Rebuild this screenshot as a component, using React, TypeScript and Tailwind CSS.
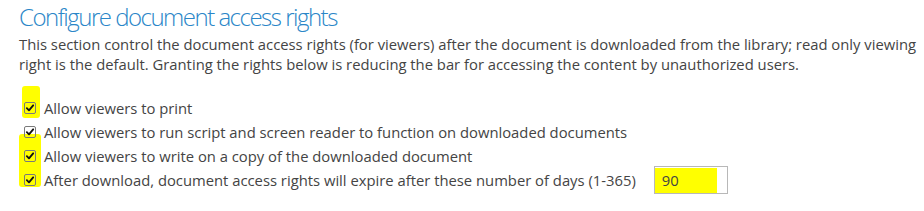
const rows = [
  'Allow viewers to print',
  'Allow viewers to run script and screen reader to function on downloaded documents',
  'Allow viewers to write on a copy of the downloaded document',
];

function Check() {
  return (
    <span className="relative z-10 flex h-[12px] w-[12px] shrink-0 items-center justify-center rounded-[2px] border border-[#7a7a7a] bg-transparent">
      <svg viewBox="0 0 12 12" className="h-[10px] w-[10px]">
        <path d="M2.2 6.2 L4.8 8.8 L9.8 2.8" fill="none" stroke="#111" strokeWidth={2.2} strokeLinecap="round" strokeLinejoin="round" />
      </svg>
    </span>
  );
}

export default function App() {
  return (
    <div className="relative h-[211px] w-[924px] overflow-hidden bg-white pl-[19px] text-[#444] [font-family:'Open_Sans',sans-serif]">
      <h2 className="text-[24px] font-light leading-[34px] tracking-[-1.5px] text-[#2a86c8]">Configure document access rights</h2>
      <p className="w-[905px] text-[14.8px] leading-[20px]">
        This section control the document access rights (for viewers) after the document is downloaded from the library; read only viewing right is the default. Granting the rights below is reducing the bar for accessing the content by unauthorized users.
      </p>
      <div className="mt-[22px] flex flex-col pl-[5px]">
        {rows.map((r) => (
          <label key={r} className="flex h-[24px] items-center gap-[8px] text-[14.8px]">
            <Check />
            <span>{r}</span>
          </label>
        ))}
        <label className="flex h-[24px] items-center gap-[8px] text-[14.8px]">
          <Check />
          <span>After download, document access rights will expire after these number of days (1-365)</span>
          <span className="relative ml-[10px] flex h-[28px] w-[74px] items-center border border-[#b8b8b8] bg-white pl-[7px]">
            <span className="absolute left-0 top-[1px] h-[25px] w-[62px] bg-[#ffff00]" />
            <span className="relative">90</span>
          </span>
        </label>
      </div>
      <span className="absolute left-[22px] top-[86px] h-[32px] w-[18px] rounded-[3px] bg-[#ffff00]" />
      <span className="absolute left-[19px] top-[134px] h-[53px] w-[22px] rounded-[3px] bg-[#ffff00]" />
    </div>
  );
}
